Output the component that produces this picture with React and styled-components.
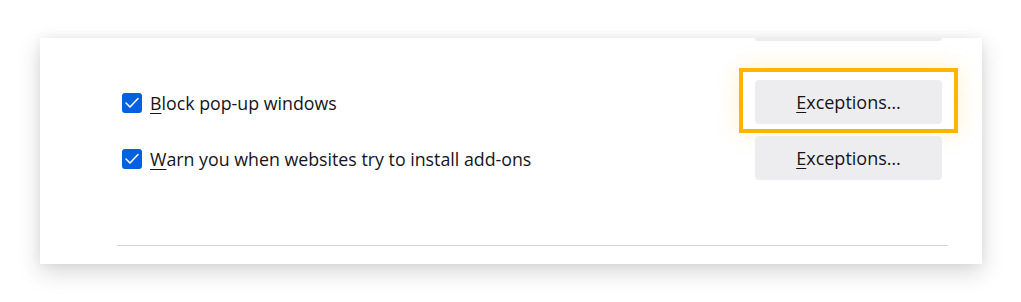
import React from 'react'
import styled, { createGlobalStyle } from 'styled-components'

const GlobalStyle = createGlobalStyle`
  html, body {
    margin: 0;
    background: #ffffff;
  }
  body {
    font-family: 'Open Sans', 'Noto Sans', sans-serif;
    color: #15141a;
  }
`

const Page = styled.div`
  padding: 38px 0 0 40px;
  width: 1021px;
  height: 302px;
  box-sizing: border-box;
`

const Card = styled.section`
  width: 942px;
  height: 226px;
  background: #ffffff;
  box-shadow: 0 8px 22px rgba(0, 0, 0, 0.16), 0 0 10px rgba(0, 0, 0, 0.05);
  padding: 0 40px 0 77px;
  box-sizing: border-box;
  display: flex;
  flex-direction: column;
`

const ButtonStub = styled.div`
  align-self: flex-end;
  width: 187px;
  height: 3px;
  background: #ededf0;
  border-radius: 0 0 4px 4px;
`

const Rows = styled.div`
  margin: 39px 0 0 5px;
  display: flex;
  flex-direction: column;
  gap: 12px;
`

const Row = styled.div`
  display: flex;
  align-items: center;
  justify-content: space-between;
`

const Label = styled.label`
  display: flex;
  align-items: center;
  gap: 8px;
  font-size: 17.8px;
  line-height: 20px;
  margin-top: 1px;
`

const Box = styled.span`
  width: 20px;
  height: 20px;
  border-radius: 3px;
  background: #0061e0;
  display: flex;
  align-items: center;
  justify-content: center;
  flex-shrink: 0;
`

const Key = styled.span`
  text-decoration: underline;
  text-underline-offset: 3px;
  text-decoration-thickness: 1px;
`

const ButtonWrap = styled.div`
  position: relative;
`

const Button = styled.button`
  width: 187px;
  height: 44px;
  border: none;
  border-radius: 4px;
  background: #ededf0;
  color: #15141a;
  font-family: 'Open Sans', 'Noto Sans', sans-serif;
  font-size: 18px;
  padding: 0;
  display: flex;
  align-items: center;
  justify-content: center;
`

const Highlight = styled.div`
  position: absolute;
  left: -16px;
  right: -16px;
  top: -12px;
  bottom: -9px;
  border: 4px solid #ffb400;
  box-shadow: 0 0 22px rgba(255, 190, 30, 0.22);
  pointer-events: none;
`

const Divider = styled.hr`
  margin: 65px -6px 0 0;
  border: none;
  border-top: 1px solid #d4d4d8;
  height: 0;
`

const Check = () => (
  <svg width="16" height="16" viewBox="0 0 16 16" fill="none">
    <path d="M2 8 L6 12 L14 3.6" stroke="#fff" strokeWidth="1.5" strokeLinecap="round" strokeLinejoin="round" />
  </svg>
)

const rows = [
  { key: 'B', rest: 'lock pop-up windows', highlight: true },
  { key: 'W', rest: 'arn you when websites try to install add-ons', highlight: false },
]

export default function App() {
  return (
    <>
      <GlobalStyle />
      <Page>
        <Card>
          <ButtonStub />
          <Rows>
            {rows.map((r) => (
              <Row key={r.key}>
                <Label>
                  <Box><Check /></Box>
                  <span><Key>{r.key}</Key>{r.rest}</span>
                </Label>
                <ButtonWrap>
                  <Button><Key>E</Key>xceptions…</Button>
                  {r.highlight && <Highlight />}
                </ButtonWrap>
              </Row>
            ))}
          </Rows>
          <Divider />
        </Card>
      </Page>
    </>
  )
}
